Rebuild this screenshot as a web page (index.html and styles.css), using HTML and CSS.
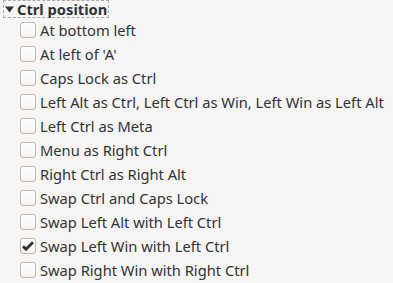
FILE: index.html
```html
<!DOCTYPE html>
<html>
<head>
<meta charset="utf-8">
<link rel="stylesheet" href="styles.css">
</head>
<body>
<div class="tree">
  <div class="header">
    <span class="focus">
      <svg class="arrow" width="9" height="7" viewBox="0 0 9 7"><path d="M0 0.5 H9 L4.5 6.5 Z" fill="#2e3436"/></svg>
      <span class="title">Ctrl position</span>
    </span>
  </div>
  <ul class="options">
    <li class="opt"><span class="box"></span><span class="label">At bottom left</span></li>
    <li class="opt"><span class="box"></span><span class="label">At left of 'A'</span></li>
    <li class="opt"><span class="box"></span><span class="label">Caps Lock as Ctrl</span></li>
    <li class="opt"><span class="box"></span><span class="label">Left Alt as Ctrl, Left Ctrl as Win, Left Win as Left Alt</span></li>
    <li class="opt"><span class="box"></span><span class="label">Left Ctrl as Meta</span></li>
    <li class="opt"><span class="box"></span><span class="label">Menu as Right Ctrl</span></li>
    <li class="opt"><span class="box"></span><span class="label">Right Ctrl as Right Alt</span></li>
    <li class="opt"><span class="box"></span><span class="label">Swap Ctrl and Caps Lock</span></li>
    <li class="opt"><span class="box"></span><span class="label">Swap Left Alt with Left Ctrl</span></li>
    <li class="opt"><span class="box checked"><svg width="14" height="14" viewBox="0 0 14 14"><path d="M2 7.3 L5 10.3 L12 3.2" fill="none" stroke="#2e3436" stroke-width="2.8" stroke-linejoin="miter"/></svg></span><span class="label">Swap Left Win with Left Ctrl</span></li>
    <li class="opt"><span class="box"></span><span class="label">Swap Right Win with Right Ctrl</span></li>
  </ul>
</div>
</body>
</html>
```
FILE: styles.css
```css
html, body {
  margin: 0;
  padding: 0;
  background: #f6f5f4;
}
body {
  font-family: "Noto Sans", "Open Sans", sans-serif;
  font-size: 14.7px;
  color: #2e3436;
  width: 393px;
  height: 283px;
  overflow: hidden;
}
.tree {
  padding: 0 0 0 3px;
}
.header {
  height: 18px;
  display: flex;
  align-items: flex-start;
}
.focus {
  display: inline-flex;
  align-items: center;
  height: 16px;
  border: 1px dashed #a8a8a8;
  padding: 0 1px 0 1px;
  gap: 3px;
}
.title {
  font-weight: bold;
  line-height: 16px;
}
.options {
  list-style: none;
  margin: 0;
  padding: 0 0 0 17px;
}
.opt {
  height: 24px;
  display: flex;
  align-items: center;
  gap: 4px;
}
.box {
  width: 14px;
  height: 14px;
  border: 1px solid #bdb8b3;
  border-radius: 3px;
  background: linear-gradient(#ffffff, #f4f2f1);
  display: flex;
  align-items: center;
  justify-content: center;
  flex: none;
}
.label {
  line-height: 18px;
  white-space: nowrap;
}
```
